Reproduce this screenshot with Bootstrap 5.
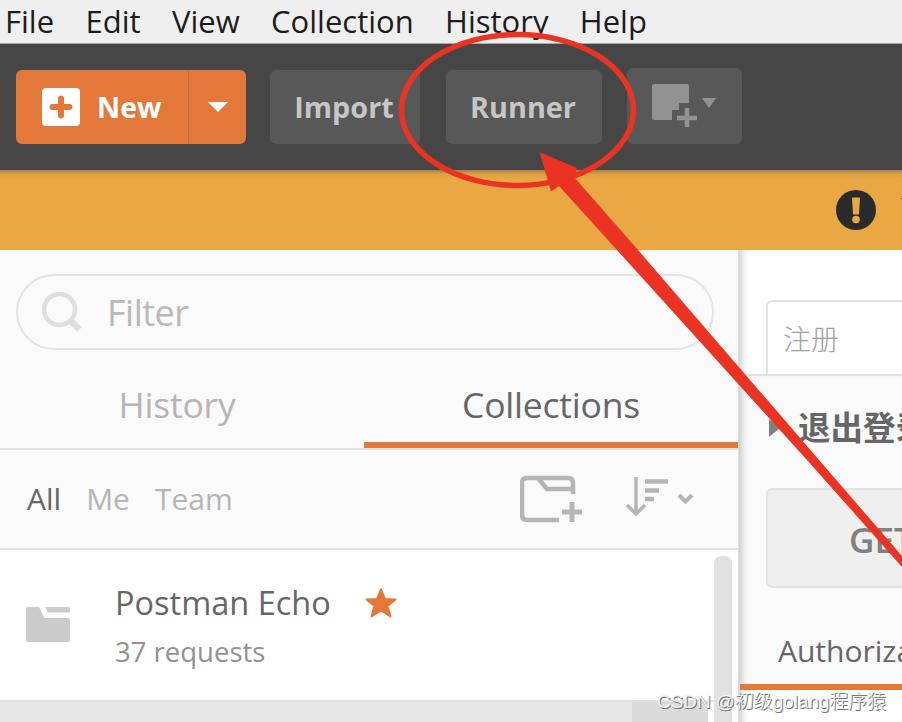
<!DOCTYPE html>
<html lang="en">
<head>
<meta charset="utf-8">
<title>Postman</title>
<meta name="viewport" content="width=device-width, initial-scale=1">
<link href="https://cdn.jsdelivr.net/npm/bootstrap@5.3.0/dist/css/bootstrap.min.css" rel="stylesheet">
<style>
html,body{height:722px;overflow:hidden}
body{font-family:"Open Sans","Noto Sans CJK SC",sans-serif;line-height:1;color:#666;background:#fff}
svg{display:block;flex:none}
.menubar{height:44px;background:#efefef;border-bottom:1px solid #a8a8a8;font-size:31px;color:#1c1c1c;padding:0 0 1px 5px;gap:31.4px}
.toolbar{height:126px;background:#464646;padding:0 0 0 16px}
.tool{height:74px;border:0;border-radius:6px;background:#585858;color:#c6c6c6;font-size:28.8px;font-weight:700;line-height:1;padding:0 2px 0 0}
.tool:hover{background:#606060;color:#ddd}
.new-group{width:230px;height:74px;margin-right:24px}
.new-main,.new-more{background:#e4783a;color:#fff}
.new-main{width:173px;border-right:1px solid #c96c39;padding-left:26px;gap:17px;border-radius:6px 0 0 6px;font-size:28.5px}
.new-more{flex:1;border-radius:0 6px 6px 0;padding:0}
.import{width:150px;margin-right:26px}
.runner{width:156px;margin-right:25px}
.window-btn{width:115px;height:76px;margin-bottom:2px;padding-left:25px}
.notice{height:80px;background:linear-gradient(#a97e3d,#dca044 4px,#e9a844 9px);padding-left:836px;gap:25px;color:#2a2a2a;font-size:30px}
.notice-text{padding-bottom:5px}
.workspace{height:472px}
.sidebar{width:739px;flex:none;background:#fafafa;border-right:1px solid #ddd}
.search{height:76px;margin:24px 24px 0 16px;border:2px solid #e3e3e3;border-radius:38px;padding:0 0 0 24px;gap:25px;font-size:36px;color:#b9b9b9;letter-spacing:-.5px}
.search span{padding-top:2px}
.side-tabs{height:100px;border-bottom:2px solid #e2e2e2;font-size:35.5px;letter-spacing:-.2px}
.side-tab{height:98px;padding-top:12px;color:#b5b5b5}
.side-tab.w-a{width:364px;padding-right:10px}
.side-tab.active{flex:1;color:#666;border-bottom:6px solid #e4783a;padding-top:18px}
.scope{height:100px;border-bottom:2px solid #e2e2e2;padding:0 44px 0 27px;font-size:30px;color:#b5b5b5;gap:25px}
.scope .on{color:#666}
.folder-add{margin-right:19px}
.list-area{height:172px;background:#fff}
.entry{width:714px;height:152px;border-bottom:2px solid #e0e0e0;padding-left:26px;gap:43px}
.entry-name{font-size:32.5px;color:#666;gap:34px;padding-top:2px}
.entry-name svg{margin-bottom:1px}
.entry-sub{font-size:27.5px;color:#929292;margin-top:18px}
.next-entry{width:708px;height:20px;background:#e8e8e8}
.next-actions{width:76px;background:#dadada}
.scroll{width:18px;margin:6px 6px 0 0;background:#e1e1e1;border-radius:7px 7px 0 0}
.main{background:#fff;box-shadow:inset 8px 0 7px -5px rgba(0,0,0,.2);min-width:0}
.tabstrip{height:126px;border-bottom:2px solid #e2e2e2;padding-left:27px}
.req-tab{width:150px;height:74px;flex:none;border:2px solid #e2e2e2;border-bottom:0;border-radius:6px 0 0 0;padding-left:15px;font-size:28px;font-weight:300;color:#a0a0a0;font-family:"Noto Sans CJK SC",sans-serif}
.request{height:314px;background:#fafafa;box-shadow:inset 8px 0 7px -5px rgba(0,0,0,.2);padding-left:27px}
.req-title{height:112px;padding:0 0 12px 3px;gap:18px;font-size:32.5px;font-weight:700;color:#666;white-space:nowrap;font-family:"Noto Sans CJK SC",sans-serif}
.req-title svg{margin-top:3px}
.method{width:300px;height:100px;background:#efefef;border:2px solid #e2e2e2;border-radius:6px;font-size:35px;font-weight:600;color:#808080;padding:2px 0 0 81px}
.subtabs{height:102px;margin-left:-26px;padding:46px 0 0 38px;border-bottom:6px solid #e4783a;font-size:30px;line-height:1.1;color:#666}
.annotation{left:0;top:0;pointer-events:none}
.watermark{left:657px;top:690px;font:300 18.9px/24px "Liberation Sans","Noto Sans CJK SC",sans-serif;color:#f4f4f4;text-shadow:1px 1px 0 #777,.5px .5px 0 #888;white-space:nowrap}
</style>
</head>
<body class="position-relative">
<nav class="menubar d-flex align-items-center">
<span>File</span><span>Edit</span><span>View</span><span>Collection</span><span>History</span><span>Help</span>
</nav>
<header class="toolbar d-flex align-items-center">
<div class="new-group d-flex">
<button class="tool new-main d-flex align-items-center"><svg width="38" height="38"><rect width="38" height="38" rx="4" fill="#fff"/><path d="M19 10.500V27.500M10.500 19H27.500" stroke="#e4783a" stroke-width="6" stroke-linecap="round"/></svg><span>New</span></button>
<button class="tool new-more d-flex align-items-center justify-content-center" aria-label="More"><svg width="20" height="10"><path d="M0 0H20L10 10Z" fill="#fff"/></svg></button>
</div>
<button class="tool import">Import</button>
<button class="tool runner">Runner</button>
<button class="tool window-btn d-flex align-items-center" aria-label="New window"><svg width="68" height="46"><path d="M2 1H35Q37 1 37 3V20H27V27H20V37H2Q0 37 0 35V3Q0 1 2 1Z" fill="#929292"/><path d="M35 25V44M25 35H45" stroke="#929292" stroke-width="4.500"/><path d="M50 15H64L57 25Z" fill="#929292"/></svg></button>
</header>
<div class="notice d-flex align-items-center overflow-hidden"><svg width="40" height="40"><circle cx="20" cy="20" r="20" fill="#2a2a2a"/><path d="M16 7.500H24L23 24.500H17Z" fill="#e9a844"/><circle cx="20" cy="29.500" r="3.800" fill="#e9a844"/></svg><span class="notice-text">Y</span></div>
<div class="workspace d-flex">
<aside class="sidebar d-flex flex-column">
<div class="search d-flex align-items-center flex-shrink-0"><svg width="40" height="40" fill="none" stroke="#dedede"><circle cx="17.500" cy="17.500" r="15.500" stroke-width="4.500"/><path d="M28 28L37.500 37.500" stroke-width="6.500"/></svg><span>Filter</span></div>
<div class="side-tabs d-flex flex-shrink-0"><div class="side-tab w-a d-flex align-items-center justify-content-center">History</div><div class="side-tab active d-flex align-items-center justify-content-center">Collections</div></div>
<div class="scope d-flex align-items-center flex-shrink-0">
<span class="on">All</span><span>Me</span><span>Team</span>
<svg class="ms-auto folder-add" width="62" height="48" fill="none" stroke="#b5b5b5"><path d="M39 45H7Q2 45 2 40V8Q2 3 7 3H48Q53 3 53 8V19M18 3L27 14H53" stroke-width="4.500"/><path d="M52 27V47M42 37H62" stroke-width="5"/></svg>
<svg class="sort-icon" width="68" height="44" fill="none" stroke="#b5b5b5"><path d="M10 0V37M1 28L10 37L19 28" stroke-width="3.500"/><path d="M19 4.500H42M19 13.500H33M19 22H28" stroke-width="4.500"/><path d="M53 18L59.500 24.500L66 18" stroke-width="4"/></svg>
</div>
<div class="list-area d-flex justify-content-between">
<div><div class="entry d-flex align-items-center"><svg width="46" height="36" fill="#cbcbcb"><path d="M2 0H13L18.500 11H42Q44 11 44 13V33Q44 35 42 35H2Q0 35 0 33V2Q0 0 2 0ZM19 0H42Q44 0 44 2V5.500H22Z"/></svg>
<div><div class="entry-name d-flex align-items-center"><span>Postman Echo</span><svg width="32" height="30"><path d="M16 1.500L20 11L30.500 11.500L22.500 18L25.500 28.500L16 22.500L6.500 28.500L9.500 18L1.500 11.500L12 11Z" fill="#e4783a" stroke="#e4783a" stroke-width="2" stroke-linejoin="round"/></svg></div><div class="entry-sub">37 requests</div></div></div>
<div class="next-entry d-flex justify-content-end"><div class="next-actions"></div></div></div>
<div class="scroll"></div>
</div>
</aside>
<main class="main flex-fill overflow-hidden">
<div class="tabstrip d-flex align-items-end"><div class="req-tab d-flex align-items-center">注册</div></div>
<section class="request">
<div class="req-title d-flex align-items-center"><svg width="11" height="18"><path d="M0 0L11 9L0 18Z" fill="#808080"/></svg><span>退出登录</span></div>
<div class="method d-flex align-items-center">GET</div>
<div class="subtabs">Authorization</div>
</section>
</main>
</div>
<svg class="annotation position-absolute" width="902" height="722"><ellipse cx="517.500" cy="110" rx="116" ry="75.500" fill="none" stroke="#ea3323" stroke-width="5.500"/><path d="M539.500 152L577 168L574 177L638 250L819 460L902 556V567L807 460L617 250L559 186L551 191.500Z" fill="#ea3323"/></svg>
<div class="watermark position-absolute">CSDN @初级golang程序猿</div>
<script src="https://cdn.jsdelivr.net/npm/bootstrap@5.3.0/dist/js/bootstrap.bundle.min.js"></script>
</body>
</html>
